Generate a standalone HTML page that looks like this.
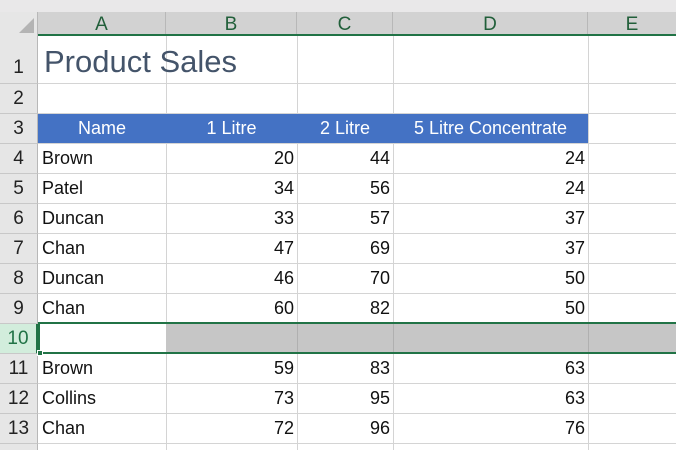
<!DOCTYPE html>
<html><head><style>
html,body{margin:0;width:676px;height:450px;overflow:hidden}
body{background:#fff;position:relative;font-family:"Liberation Sans",sans-serif}
div{position:absolute;box-sizing:border-box}
.ch{top:12px;height:24px;background:#d2d2d2;border-right:1px solid #b8b8b8;color:#215f3a;font-size:19px;text-align:center;line-height:26px}
.rh{left:0;width:38px;background:#e6e6e6;border-bottom:1px solid #c8c8c8;border-right:1px solid #b8b8b8;font-size:19px;text-align:center;color:#222}
.vl{top:36px;height:414px;width:1px;background:#d4d4d4}
.hl{left:38px;right:0;height:1px;background:#d4d4d4}
.t{font-size:18px;color:#111;height:30px;line-height:31px;white-space:nowrap}
.n{text-align:right}
.h{text-align:center;color:#fff}
</style></head><body>
<div style="left:0;top:0;width:676px;height:12px;background:#e9e8e9"></div>
<div style="left:0;top:12px;width:38px;height:24px;background:#e6e6e6;border-right:1px solid #b8b8b8"></div>
<div style="left:19px;top:18px;width:0;height:0;border-left:15px solid transparent;border-bottom:15px solid #b4b4b4"></div>
<div class="ch" style="left:38px;width:128px">A</div>
<div class="ch" style="left:166px;width:131px">B</div>
<div class="ch" style="left:297px;width:96px">C</div>
<div class="ch" style="left:393px;width:195px">D</div>
<div class="ch" style="left:588px;width:88px;border-right:0">E</div>
<div style="left:38px;top:34px;width:638px;height:2px;background:#217346"></div>
<div class="vl" style="left:166px"></div><div class="vl" style="left:297px"></div><div class="vl" style="left:393px"></div><div class="vl" style="left:588px"></div>
<div class="hl" style="top:83px"></div><div class="hl" style="top:113px"></div><div class="hl" style="top:143px"></div>
<div class="hl" style="top:173px"></div><div class="hl" style="top:203px"></div><div class="hl" style="top:233px"></div>
<div class="hl" style="top:263px"></div><div class="hl" style="top:293px"></div><div class="hl" style="top:323px"></div>
<div class="hl" style="top:353px"></div><div class="hl" style="top:383px"></div><div class="hl" style="top:413px"></div><div class="hl" style="top:443px"></div>
<div class="rh" style="top:36px;height:48px;line-height:64px">1</div>
<div class="rh" style="top:84px;height:30px;line-height:30px">2</div>
<div class="rh" style="top:114px;height:30px;line-height:30px">3</div>
<div class="rh" style="top:144px;height:30px;line-height:30px">4</div>
<div class="rh" style="top:174px;height:30px;line-height:30px">5</div>
<div class="rh" style="top:204px;height:30px;line-height:30px">6</div>
<div class="rh" style="top:234px;height:30px;line-height:30px">7</div>
<div class="rh" style="top:264px;height:30px;line-height:30px">8</div>
<div class="rh" style="top:294px;height:30px;line-height:30px">9</div>
<div class="rh" style="top:324px;height:30px;line-height:30px;background:#d2eddc;color:#217346;border-right:2px solid #217346">10</div>
<div class="rh" style="top:354px;height:30px;line-height:30px">11</div>
<div class="rh" style="top:384px;height:30px;line-height:30px">12</div>
<div class="rh" style="top:414px;height:30px;line-height:30px">13</div>
<div class="rh" style="top:444px;height:6px;border-bottom:0"></div>
<div style="left:44px;top:42px;font-size:31px;color:#44546a;line-height:40px">Product Sales</div>
<div style="left:38px;top:114px;width:550px;height:29px;background:#4472c4"></div>
<div class="t h" style="left:38px;top:113px;width:128px">Name</div>
<div class="t h" style="left:166px;top:113px;width:131px">1 Litre</div>
<div class="t h" style="left:297px;top:113px;width:96px">2 Litre</div>
<div class="t h" style="left:393px;top:113px;width:195px">5 Litre Concentrate</div>
<div style="left:166px;top:324px;width:510px;height:29px;background:#c6c6c6"></div>
<div style="left:297px;top:324px;width:1px;height:29px;background:#b0b0b0"></div>
<div style="left:393px;top:324px;width:1px;height:29px;background:#b0b0b0"></div>
<div style="left:588px;top:324px;width:1px;height:29px;background:#b0b0b0"></div>
<div style="left:38px;top:322px;width:638px;height:32px;border:2px solid #217346;border-right:0"></div>
<div style="left:37px;top:350px;width:6px;height:6px;background:#217346;border:1px solid #fff"></div>
<div class="t" style="left:42px;top:143px">Brown</div><div class="t n" style="left:166px;top:143px;width:128px">20</div><div class="t n" style="left:297px;top:143px;width:93px">44</div><div class="t n" style="left:393px;top:143px;width:192px">24</div>
<div class="t" style="left:42px;top:173px">Patel</div><div class="t n" style="left:166px;top:173px;width:128px">34</div><div class="t n" style="left:297px;top:173px;width:93px">56</div><div class="t n" style="left:393px;top:173px;width:192px">24</div>
<div class="t" style="left:42px;top:203px">Duncan</div><div class="t n" style="left:166px;top:203px;width:128px">33</div><div class="t n" style="left:297px;top:203px;width:93px">57</div><div class="t n" style="left:393px;top:203px;width:192px">37</div>
<div class="t" style="left:42px;top:233px">Chan</div><div class="t n" style="left:166px;top:233px;width:128px">47</div><div class="t n" style="left:297px;top:233px;width:93px">69</div><div class="t n" style="left:393px;top:233px;width:192px">37</div>
<div class="t" style="left:42px;top:263px">Duncan</div><div class="t n" style="left:166px;top:263px;width:128px">46</div><div class="t n" style="left:297px;top:263px;width:93px">70</div><div class="t n" style="left:393px;top:263px;width:192px">50</div>
<div class="t" style="left:42px;top:293px">Chan</div><div class="t n" style="left:166px;top:293px;width:128px">60</div><div class="t n" style="left:297px;top:293px;width:93px">82</div><div class="t n" style="left:393px;top:293px;width:192px">50</div>
<div class="t" style="left:42px;top:353px">Brown</div><div class="t n" style="left:166px;top:353px;width:128px">59</div><div class="t n" style="left:297px;top:353px;width:93px">83</div><div class="t n" style="left:393px;top:353px;width:192px">63</div>
<div class="t" style="left:42px;top:383px">Collins</div><div class="t n" style="left:166px;top:383px;width:128px">73</div><div class="t n" style="left:297px;top:383px;width:93px">95</div><div class="t n" style="left:393px;top:383px;width:192px">63</div>
<div class="t" style="left:42px;top:413px">Chan</div><div class="t n" style="left:166px;top:413px;width:128px">72</div><div class="t n" style="left:297px;top:413px;width:93px">96</div><div class="t n" style="left:393px;top:413px;width:192px">76</div>
</body></html>
